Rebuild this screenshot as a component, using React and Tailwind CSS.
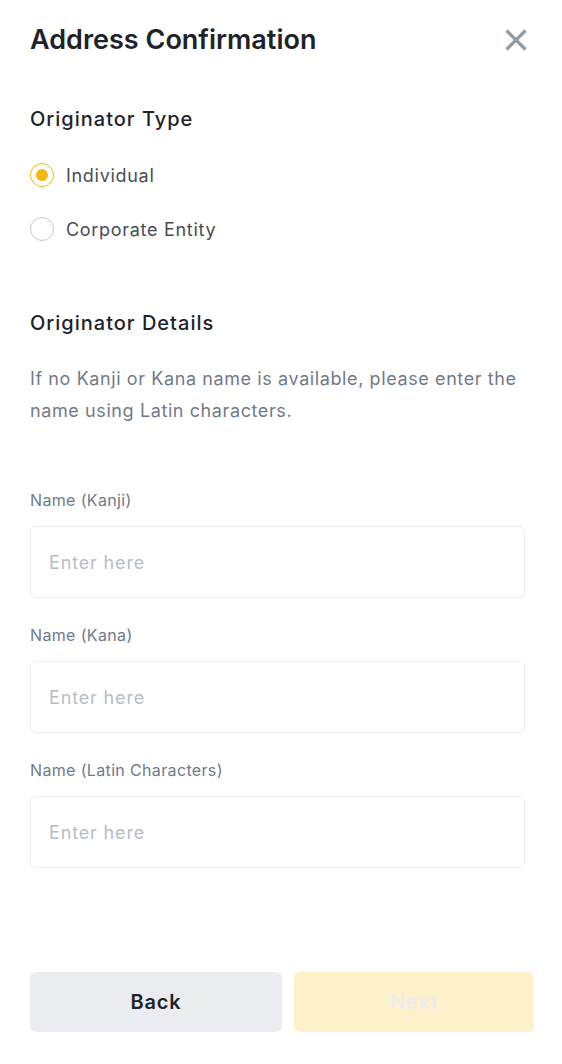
import React from "react";

function Radio({ checked, label }) {
  return (
    <label className="flex items-center h-[24px] gap-3">
      <span
        className={
          checked
            ? "w-[24px] h-[24px] shrink-0 rounded-full border border-[#f0b90b] flex items-center justify-center"
            : "w-[24px] h-[24px] shrink-0 rounded-full border border-[#c5cad1]"
        }
      >
        {checked && <span className="w-[12px] h-[12px] rounded-full bg-[#f0b90b]" />}
      </span>
      <span className="text-[18px] tracking-[0.7px] text-[#474d57]">{label}</span>
    </label>
  );
}

function Field({ label }) {
  return (
    <div className="flex flex-col">
      <div className="text-[16px] leading-[20px] tracking-[0.35px] text-[#707a8a]">{label}</div>
      <div className="mt-[16px] h-[72px] rounded-[6px] border border-[#eaecef] flex items-center px-[18px]">
        <span className="text-[18px] tracking-[0.85px] text-[#b7bdc6]">Enter here</span>
      </div>
    </div>
  );
}

export default function App() {
  return (
    <div
      className="w-[562px] h-[1064px] bg-white flex flex-col px-[30px]"
      style={{ fontFamily: "Inter, 'Noto Sans', sans-serif" }}
    >
      <div className="flex items-center justify-between h-[40px] mt-[20px]">
        <h1 className="text-[27px] font-semibold text-[#1e2329]">Address Confirmation</h1>
        <svg width="24" height="24" viewBox="0 0 24 24" className="mr-[4px] shrink-0">
          <path d="M2.5 2.5 L21.5 21.5 M21.5 2.5 L2.5 21.5" stroke="#929aa5" strokeWidth="3.2" strokeLinecap="butt" />
        </svg>
      </div>

      <h2 className="mt-[46px] text-[20px] leading-[26px] font-medium tracking-[1px] text-[#1e2329]">Originator Type</h2>
      <div className="mt-[31px] flex flex-col gap-[30px]">
        <Radio checked label="Individual" />
        <Radio label="Corporate Entity" />
      </div>

      <h2 className="mt-[69px] text-[20px] leading-[26px] font-medium tracking-[1px] text-[#1e2329]">Originator Details</h2>
      <p className="mt-[27px] text-[18px] leading-[32px] tracking-[0.6px] text-[#707a8a]">
        If no Kanji or Kana name is available, please enter the name using Latin characters.
      </p>

      <div className="mt-[63px] flex flex-col gap-[27px] w-[495px]">
        <Field label="Name (Kanji)" />
        <Field label="Name (Kana)" />
        <Field label="Name (Latin Characters)" />
      </div>

      <div className="mt-auto mb-[32px] flex gap-[12px]">
        <button className="w-[252px] shrink-0 h-[60px] rounded-[6px] bg-[#eaecef] text-[20px] font-semibold tracking-[0.8px] text-[#1e2329]">
          Back
        </button>
        <button className="w-[240px] shrink-0 h-[60px] rounded-[6px] bg-[#fef1c9] text-[20px] font-semibold tracking-[0.8px] text-[#eaecef]">
          Next
        </button>
      </div>
    </div>
  );
}
